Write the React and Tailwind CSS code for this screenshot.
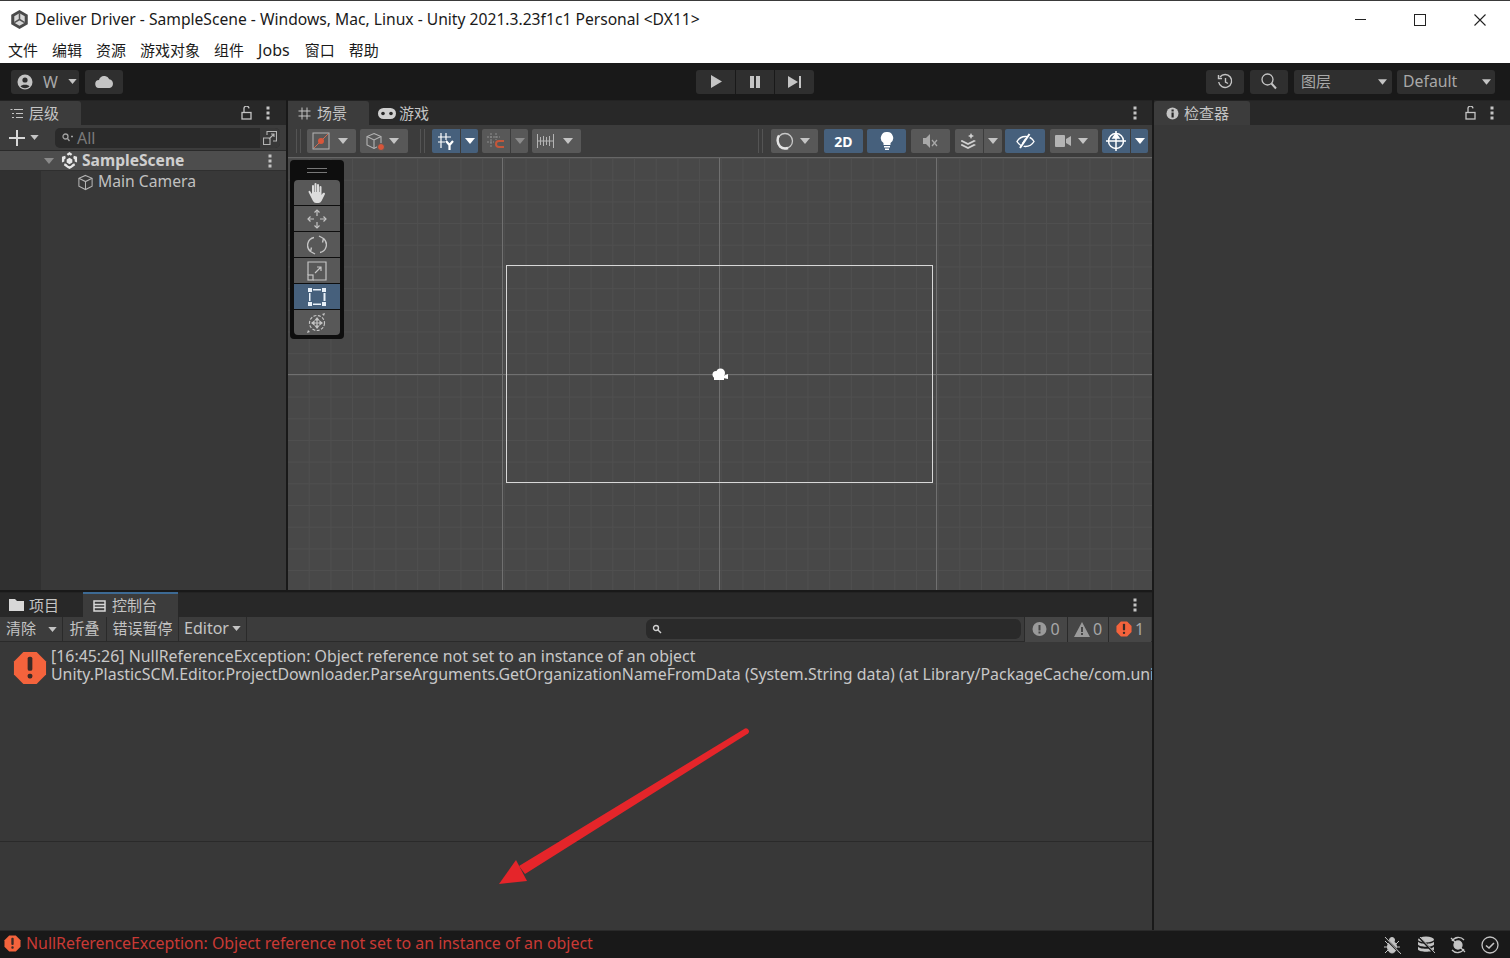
import React from "react";

const Caret = ({ className = "fill-[#c4c4c4]", w = 10, h = 6 }) => (
  <svg width={w} height={h} viewBox="0 0 10 6" className={className}>
    <path d="M0 0h10L5 6z" />
  </svg>
);

const Dots = ({ className = "" }) => (
  <svg width="4" height="14" viewBox="0 0 4 14" className={`fill-[#c4c4c4] ${className}`}>
    <rect x="0.5" y="0.5" width="3" height="3" />
    <rect x="0.5" y="5.5" width="3" height="3" />
    <rect x="0.5" y="10.5" width="3" height="3" />
  </svg>
);

const LockIcon = () => (
  <svg width="12" height="14" viewBox="0 0 12 14" fill="none" stroke="#c4c4c4" strokeWidth="1.3">
    <rect x="1" y="6.5" width="9" height="6.5" />
    <path d="M3 6.5V3a2.5 2.5 0 0 1 5-.6" />
  </svg>
);

const CubeIcon = ({ size = 18, stroke = "#b4b4b4" }) => (
  <svg width={size} height={size} viewBox="0 0 18 18" fill="none" stroke={stroke} strokeWidth="1.1">
    <path d="M9 1.5l7 3v8.5l-7 3.5-7-3.5V4.500z" />
    <path d="M2 4.500l7 3.500 7-3.500M9 8v8.500" />
  </svg>
);

const ErrorOct = ({ size = 20 }) => (
  <svg width={size} height={size} viewBox="0 0 36 36">
    <path d="M11 1h14l10 10v14L25 35H11L1 25V11z" fill="#f4633c" />
    <rect x="15.500" y="6" width="5" height="15" rx="2" fill="#3a2a26" />
    <rect x="15.500" y="24" width="5" height="5" rx="2" fill="#3a2a26" />
  </svg>
);

const UnityMark = ({ size = 17, fill = "#e6e6e6" }) => (
  <svg width={size} height={size} viewBox="0 0 18 18" fill={fill}>
    <path d="M9 0l3 2-1.500 2L9 3 7.500 4 6 2zM1 5l3.500-1 .5 2.500L3.500 8v2L1 11zM17 5l-3.500-1-.5 2.500L14.500 8v2l2.500 1zM9 6l3 2v3l-3 2-3-2V8zM4 12l2 1 1.500 1.500L9 15l1.500-.5L12 13l2-1 1 2-4 3-2 1-2-1-4-3z" />
  </svg>
);

function TitleBar() {
  return (
    <div className="h-[38px] shrink-0 bg-white border-t border-[#3a3a3a] flex items-center pl-[10px] text-[15.65px] text-[#1a1a1a]">
      <svg width="19" height="19" viewBox="0 0 20 20">
        <path d="M10 0l8.700 5v10L10 20l-8.700-5V5z" fill="#4a4a4a" />
        <path d="M10 3.500l5.500 3.200v6.600L10 16.500l-5.500-3.200V6.700z" fill="#d8d8d8" />
        <path d="M10 10V3.500M10 10l5.500 3.300M10 10l-5.500 3.300" stroke="#555" strokeWidth="1.600" />
      </svg>
      <span className="ml-[6px] whitespace-nowrap">Deliver Driver - SampleScene - Windows, Mac, Linux - Unity 2021.3.23f1c1 Personal &lt;DX11&gt;</span>
      <div className="ml-auto flex items-center text-[#111]">
        <div className="w-[60px] flex justify-center">
          <div className="w-[11px] h-px bg-[#222]" />
        </div>
        <div className="w-[60px] flex justify-center">
          <div className="w-[12px] h-[12px] border border-[#222]" />
        </div>
        <div className="w-[60px] flex justify-center">
          <svg width="12" height="12" viewBox="0 0 12 12" stroke="#222" strokeWidth="1.100">
            <path d="M.5.5l11 11M11.500.5l-11 11" />
          </svg>
        </div>
      </div>
    </div>
  );
}

function MenuBar() {
  const items = ["文件", "编辑", "资源", "游戏对象", "组件", "Jobs", "窗口", "帮助"];
  return (
    <div className="h-[25px] shrink-0 bg-white flex items-start pl-[8px] gap-[14px] text-[15px] text-[#1a1a1a] pt-[1px]">
      {items.map((m) => (
        <span key={m} className={m === "Jobs" ? "leading-[22px] text-[16px] mr-[1px]" : "leading-[22px]"}>{m}</span>
      ))}
    </div>
  );
}

const TopBtn = ({ className = "", children }) => (
  <div className={`h-[24px] bg-[#2f2f2f] rounded-[3px] flex items-center ${className}`}>{children}</div>
);

function MainToolbar() {
  return (
    <div className="h-[37px] shrink-0 bg-[#191919] flex items-center text-[16px] text-[#a0a0a0]">
      <TopBtn className="ml-[11px] w-[68px] gap-[10px] pl-[6px]">
        <svg width="16" height="16" viewBox="0 0 16 16">
          <circle cx="8" cy="8" r="7.500" fill="#c4c4c4" />
          <circle cx="8" cy="6" r="2.600" fill="#2f2f2f" />
          <path d="M3.500 12.500c1-2.500 8-2.500 9 0a7 7 0 0 1-9 0z" fill="#2f2f2f" />
        </svg>
        <span className="text-[#a8a8a8] leading-none">W</span>
        <Caret w={9} h={5} />
      </TopBtn>
      <TopBtn className="ml-[6px] w-[38px] justify-center">
        <svg width="19" height="12" viewBox="0 0 19 12" fill="#c4c4c4">
          <path d="M4.500 12a4 4 0 0 1-.5-8 5.500 5.500 0 0 1 10.300-.8A4.500 4.500 0 0 1 14.500 12z" />
        </svg>
      </TopBtn>
      <div className="ml-[573px] flex gap-px">
        <TopBtn className="w-[39px] rounded-r-none justify-center">
          <svg width="12" height="13" viewBox="0 0 12 13" fill="#c4c4c4"><path d="M1 0l11 6.500L1 13z" /></svg>
        </TopBtn>
        <TopBtn className="w-[38px] rounded-none justify-center">
          <svg width="10" height="12" viewBox="0 0 10 12" fill="#c4c4c4"><rect width="4" height="12" /><rect x="6" width="4" height="12" /></svg>
        </TopBtn>
        <TopBtn className="w-[39px] rounded-l-none justify-center">
          <svg width="13" height="12" viewBox="0 0 13 12" fill="#c4c4c4"><path d="M0 0l10 6-10 6z" /><rect x="11" width="2" height="12" /></svg>
        </TopBtn>
      </div>
      <TopBtn className="ml-[392px] w-[38px] justify-center">
        <svg width="17" height="17" viewBox="0 0 17 17" fill="none" stroke="#c4c4c4" strokeWidth="1.400">
          <path d="M3 4a6.500 6.500 0 1 1-1.300 5" />
          <path d="M1.500 2v3.500H5M8.500 5v4l2.500 1.500" />
        </svg>
      </TopBtn>
      <TopBtn className="ml-[6px] w-[38px] justify-center">
        <svg width="16" height="17" viewBox="0 0 16 17" fill="none" stroke="#c4c4c4" strokeWidth="1.300">
          <circle cx="6.500" cy="6.500" r="5.500" />
          <path d="M10.500 10.500l4.500 5" strokeWidth="2" />
        </svg>
      </TopBtn>
      <TopBtn className="ml-[6px] w-[98px] justify-between pl-[7px] pr-[5px]">
        <span className="text-[#a8a8a8] text-[15px]">图层</span>
        <Caret w={9} h={6} />
      </TopBtn>
      <TopBtn className="ml-[5px] w-[98px] justify-between pl-[6px] pr-[4px]">
        <span className="text-[#a8a8a8] text-[15.8px]">Default</span>
        <Caret w={9} h={6} />
      </TopBtn>
    </div>
  );
}

const TabStrip = ({ children, right, mr = "mr-[16px]" }) => (
  <div className="h-[25px] shrink-0 bg-[#282828] flex items-end text-[15px] text-[#c4c4c4] border-t border-[#232323]">
    {children}
    <div className={`ml-auto ${mr} self-center flex items-center gap-[13px]`}>{right}</div>
  </div>
);

function Hierarchy() {
  return (
    <div className="w-[286px] shrink-0 flex flex-col bg-[#383838]">
      <TabStrip right={<><LockIcon /><Dots /></>}>
        <div className="w-[81px] h-[24px] bg-[#3c3c3c] rounded-tr-[3px] flex items-center pl-[10px] gap-[6px]">
          <svg width="13" height="11" viewBox="0 0 13 11" stroke="#c4c4c4" strokeWidth="1.100" fill="none">
            <path d="M4 1.500h9M6 5.500h7M6 9.500h7M.5 1.500h2M2 5.500h2M2 9.500h2" />
          </svg>
          <span>层级</span>
        </div>
      </TabStrip>
      <div className="h-[26px] shrink-0 bg-[#3c3c3c] flex items-center pl-[9px] border-b border-[#2a2a2a]">
        <svg width="16" height="16" viewBox="0 0 16 16" fill="#d8d8d8">
          <rect y="7" width="16" height="2" /><rect x="7" width="2" height="16" />
        </svg>
        <Caret className="ml-[5px] fill-[#c4c4c4]" w={9} h={5} />
        <div className="ml-[16px] flex-1 mr-[6px] h-[20px] bg-[#2a2a2a] rounded-[5px] flex items-center pl-[7px] text-[#7a7a7a] text-[16px]">
          <svg width="11" height="9" viewBox="0 0 11 9" fill="none" stroke="#a0a0a0" strokeWidth="1.300">
            <circle cx="3.500" cy="3.500" r="2.500" /><path d="M5.500 5.500l2 2.500M9 3.500h2" />
          </svg>
          <span className="ml-[4px] leading-none">All</span>
          <div className="ml-auto w-[20px] h-[20px] bg-[#383838] rounded-r-[5px] flex items-center justify-center">
            <svg width="14" height="14" viewBox="0 0 14 14" fill="none" stroke="#b4b4b4" strokeWidth="1.100">
              <path d="M4 4V.5h9.500V10H10M.5 7h6.500v6.500H.5zM6 8l5-5M8 3h3v3" />
            </svg>
          </div>
        </div>
      </div>
      <div className="flex-1 flex">
        <div className="flex-1 flex flex-col bg-[linear-gradient(90deg,#303030_41px,#383838_41px)]">
          <div className="h-[20px] bg-[#4d4d4d] border-b border-[#2f2f2f] flex items-center pl-[44px] pr-[14px] text-[15.6px] font-bold text-[#cfcfcf]">
            <Caret className="fill-[#8a8a8a]" w={10} h={8} />
            <span className="ml-[7px]"><UnityMark /></span>
            <span className="ml-[4px] leading-none">SampleScene</span>
            <Dots className="ml-auto" />
          </div>
          <div className="h-[22px] flex items-center pl-[77px] text-[15.7px] text-[#c0c0c0]">
            <CubeIcon size={17} />
            <span className="ml-[4px] leading-none">Main Camera</span>
          </div>
        </div>
      </div>
    </div>
  );
}

const SceneBtn = ({ className = "", blue = false, children }) => (
  <div className={`h-[24px] rounded-[2px] flex items-center ${blue ? "bg-[#46607c]" : "bg-[#585858]"} ${className}`}>{children}</div>
);

const Grip = ({ className = "" }) => (
  <div className={`h-[24px] w-[5px] border-x border-[#545454] ${className}`} />
);

const Tool = ({ active = false, children }) => (
  <div className={`w-[46px] h-[25px] flex items-center justify-center ${active ? "bg-[#46607c]" : "bg-[#585858]"}`}>{children}</div>
);

function SceneToolbar() {
  return (
    <div className="h-[33px] shrink-0 bg-[#3c3c3c] flex items-center pl-[8px] border-b border-[#666]">
      <Grip />
      <SceneBtn className="ml-[6px] w-[49px] pl-[5px] gap-[8px]">
        <svg width="18" height="18" viewBox="0 0 18 18" fill="none">
          <rect x="1" y="1" width="16" height="16" stroke="#b4b4b4" />
          <path d="M2 16L16 2" stroke="#d06a50" />
          <circle cx="9" cy="9" r="3" fill="#d8563a" />
        </svg>
        <Caret />
      </SceneBtn>
      <SceneBtn className="ml-[4px] w-[48px] pl-[5px] gap-[6px]">
        <span className="relative">
          <CubeIcon size={18} />
          <span className="absolute right-[-2px] bottom-[-1px] w-[8px] h-[8px] rounded-full bg-[#d8563a] border border-[#585858]" />
        </span>
        <Caret />
      </SceneBtn>
      <Grip className="ml-[12px]" />
      <div className="ml-[7px] flex gap-px">
        <SceneBtn blue className="w-[28px] rounded-r-none justify-center">
          <svg width="18" height="18" viewBox="0 0 18 18" fill="none" stroke="#fff" strokeWidth="1.200">
            <path d="M1 5h13M1 10h7M4 1v15M9 1v7" />
            <path d="M9 9l3.500 4 3.500-4M12.500 13v5" strokeWidth="2.200" />
          </svg>
        </SceneBtn>
        <SceneBtn blue className="w-[17px] rounded-l-none justify-center"><Caret className="fill-white" /></SceneBtn>
      </div>
      <div className="ml-[4px] flex gap-px">
        <SceneBtn className="w-[28px] rounded-r-none bg-[#4a4a4a] justify-center">
          <svg width="20" height="18" viewBox="0 0 20 18" fill="none" stroke="#8c8c8c">
            <path d="M1 5h13M1 10h7M5 1v15M10 1v7" strokeDasharray="2 1" />
            <path d="M18 9h-5a3 3 0 0 0 0 6h5" stroke="#c4573a" strokeWidth="2" />
          </svg>
        </SceneBtn>
        <SceneBtn className="w-[17px] rounded-l-none bg-[#4a4a4a] justify-center"><Caret className="fill-[#8c8c8c]" /></SceneBtn>
      </div>
      <SceneBtn className="ml-[4px] w-[49px] pl-[5px] gap-[9px]">
        <svg width="17" height="16" viewBox="0 0 17 16" fill="none" stroke="#b4b4b4">
          <path d="M.5 1v14M16.500 1v14M3.500 4v8M6.500 3v10M9.500 4v8M12.500 3v10M.5 8h16" />
        </svg>
        <Caret />
      </SceneBtn>
      <Grip className="ml-[177px]" />
      <SceneBtn className="ml-[8px] w-[47px] pl-[5px] gap-[6px]">
        <svg width="18" height="18" viewBox="0 0 18 18" fill="none">
          <circle cx="9" cy="9" r="7.500" stroke="#c8c8c8" strokeWidth="1.300" />
          <path d="M3 3.500C1 6 1 11 4 14.500c2 1.800 5 2.500 8 1.500" stroke="#e4e4e4" strokeWidth="2.400" />
        </svg>
        <Caret />
      </SceneBtn>
      <SceneBtn blue className="ml-[6px] w-[39px] justify-center text-[14px] font-bold text-white">2D</SceneBtn>
      <SceneBtn blue className="ml-[4px] w-[39px] justify-center">
        <svg width="14" height="18" viewBox="0 0 14 18" fill="#fff">
          <path d="M7 0a6 6 0 0 1 3.500 11v2h-7v-2A6 6 0 0 1 7 0z" /><rect x="4" y="14" width="6" height="1.500" /><rect x="5" y="16.500" width="4" height="1.500" />
        </svg>
      </SceneBtn>
      <SceneBtn className="ml-[5px] w-[39px] justify-center">
        <svg width="15" height="14" viewBox="0 0 15 14" fill="#a8a8a8">
          <path d="M0 4h3l4-4v14l-4-4H0z" />
          <path d="M9 6l5 6M14 6l-5 6" stroke="#a8a8a8" strokeWidth="1.300" />
        </svg>
      </SceneBtn>
      <div className="ml-[5px] flex gap-px">
        <SceneBtn className="w-[28px] rounded-r-none justify-center">
          <svg width="16" height="16" viewBox="0 0 16 16" fill="#d0d0d0">
            <path d="M1 7l6 3 6-3 2 1-8 4-8-4zM1 11l6 3 6-3 2 1-8 4-8-4z" />
            <path d="M10 0l1 2 2 1-2 1-1 2-1-2-2-1 2-1z" />
          </svg>
        </SceneBtn>
        <SceneBtn className="w-[18px] rounded-l-none justify-center"><Caret /></SceneBtn>
      </div>
      <SceneBtn blue className="ml-[3px] w-[40px] justify-center">
        <svg width="19" height="16" viewBox="0 0 19 16" fill="none" stroke="#fff" strokeWidth="1.400">
          <path d="M1 8.500s3-5 8.500-5S18 8.500 18 8.500s-3 5-8.500 5c-5.500 0-8.500-5-8.500-5z" />
          <path d="M14.500 1L5 15" strokeWidth="2.400" stroke="#46607c" />
          <path d="M13.500 1L4 15" strokeWidth="2" />
          <path d="M6 10l3-4.500h2L7 11z" fill="#fff" stroke="none" />
        </svg>
      </SceneBtn>
      <SceneBtn className="ml-[5px] w-[48px] pl-[5px] gap-[7px]">
        <svg width="16" height="12" viewBox="0 0 16 12" fill="#b4b4b4">
          <rect width="10" height="12" rx="1" /><path d="M11 4l5-3v10l-5-3z" />
        </svg>
        <Caret />
      </SceneBtn>
      <div className="ml-[4px] flex gap-px">
        <SceneBtn blue className="w-[28px] rounded-r-none justify-center">
          <svg width="20" height="20" viewBox="0 0 20 20" fill="none" stroke="#fff" strokeWidth="1.500">
            <circle cx="10" cy="10" r="7.500" /><path d="M10 0v20M0 10h20" />
            <path d="M10 2.500L7 7h6z" fill="#fff" />
          </svg>
        </SceneBtn>
        <SceneBtn blue className="w-[17px] rounded-l-none justify-center"><Caret className="fill-white" /></SceneBtn>
      </div>
    </div>
  );
}

function Toolbox() {
  return (
    <div className="absolute left-[2px] top-[2px] w-[54px] bg-[#0e0e0e] rounded-[4px] px-[4px] pb-[4px] flex flex-col">
      <div className="h-[20px] flex flex-col items-center justify-center gap-[3px]">
        <div className="w-[20px] h-px bg-[#777]" />
        <div className="w-[20px] h-px bg-[#777]" />
      </div>
      <div className="flex flex-col gap-px rounded-[4px] overflow-hidden">
        <Tool>
          <svg width="20" height="22" viewBox="0 0 20 22" fill="#dcdcdc">
            <path d="M3 9l2 3V4a1 1 0 0 1 2 0v6h.5V2a1 1 0 0 1 2 0v8h.5V3a1 1 0 0 1 2 0v7h.5V5a1 1 0 0 1 2 0v8l1.500-2a1.200 1.200 0 0 1 2 1l-3.500 7a4 4 0 0 1-3 2H9a4 4 0 0 1-3-2L1.500 10a1 1 0 0 1 1.500-1z" />
          </svg>
        </Tool>
        <Tool>
          <svg width="20" height="20" viewBox="0 0 20 20" fill="none" stroke="#c4c4c4" strokeWidth="1.200">
            <path d="M10 1v6M10 13v6M1 10h6M13 10h6" />
            <path d="M7.500 3.500L10 1l2.500 2.500M7.500 16.500L10 19l2.500-2.500M3.500 7.500L1 10l2.500 2.500M16.500 7.500L19 10l-2.500 2.500" />
          </svg>
        </Tool>
        <Tool>
          <svg width="20" height="20" viewBox="0 0 20 20" fill="none" stroke="#c4c4c4" strokeWidth="1.400">
            <path d="M7 2.500a8 8 0 0 0-3.500 14" />
            <path d="M13 17.500a8 8 0 0 0 3.500-14" />
            <path d="M8 19l-4.500-2.500 1-4M12 1l4.500 2.500-1 4" />
          </svg>
        </Tool>
        <Tool>
          <svg width="20" height="20" viewBox="0 0 20 20" fill="none" stroke="#c4c4c4" strokeWidth="1.200">
            <path d="M1 14V1h18v18H6" /><rect x="1" y="14" width="5" height="5" />
            <path d="M8 12l6-6M10 6h4v4" />
          </svg>
        </Tool>
        <Tool active>
          <svg width="20" height="20" viewBox="0 0 20 20" fill="#e8f0f8">
            <rect x="1" y="1" width="4" height="4" /><rect x="15" y="1" width="4" height="4" /><rect x="1" y="15" width="4" height="4" /><rect x="15" y="15" width="4" height="4" />
            <rect x="6" y="2" width="8" height="1.500" /><rect x="6" y="16.500" width="8" height="1.500" /><rect x="2" y="6" width="1.500" height="8" /><rect x="16.500" y="6" width="2" height="8" />
          </svg>
        </Tool>
        <Tool>
          <svg width="20" height="20" viewBox="0 0 20 20" fill="none" stroke="#c4c4c4" strokeWidth="1.200">
            <circle cx="10" cy="10" r="7.500" strokeDasharray="3 1.500" />
            <path d="M10 6v8M6 10h8M10 5l-1.500 2h3zM10 15l-1.500-2h3zM5 10l2-1.500v3zM15 10l-2-1.500v3z" />
            <path d="M18 0l-3 1 2 2zM0 20l3-1-2-2z" fill="#c4c4c4" stroke="none" />
          </svg>
        </Tool>
      </div>
    </div>
  );
}

function Scene() {
  return (
    <div className="flex-1 flex flex-col min-w-0">
      <TabStrip mr="mr-[15px]" right={<Dots />}>
        <div className="w-[81px] h-[24px] bg-[#3c3c3c] rounded-tr-[3px] flex items-center pl-[10px] gap-[6px]">
          <svg width="13" height="13" viewBox="0 0 13 13" stroke="#c4c4c4" fill="none"><path d="M4 .5v12M9 .5v12M.5 4h12M.5 9h12" /></svg>
          <span>场景</span>
        </div>
        <div className="h-[24px] flex items-center pl-[9px] gap-[3px]">
          <svg width="18" height="11" viewBox="0 0 18 11" fill="#d0d0d0">
            <rect width="18" height="11" rx="5.500" /><circle cx="5" cy="5.500" r="1.800" fill="#282828" /><circle cx="13" cy="5.500" r="1.800" fill="#282828" />
          </svg>
          <span>游戏</span>
        </div>
      </TabStrip>
      <SceneToolbar />
      <div className="relative flex-1 overflow-hidden bg-[#484848] bg-[linear-gradient(#4f4f4f_1px,transparent_1px),linear-gradient(90deg,#4f4f4f_1px,transparent_1px)] bg-size-[21.7px_21.7px] bg-position-[-1px_0px]">
        <div className="absolute left-[214px] top-0 bottom-0 w-px bg-[#707070]" />
        <div className="absolute left-[431px] top-0 bottom-0 w-px bg-[#707070]" />
        <div className="absolute left-[648px] top-0 bottom-0 w-px bg-[#707070]" />
        <div className="absolute left-0 right-0 top-[216px] h-px bg-[#707070]" />
        <div className="absolute left-[218px] top-[107px] w-[427px] h-[218px] border border-[#d8d8d8]" />
        <svg className="absolute left-[423px] top-[210px]" width="18" height="13" viewBox="0 0 18 13" fill="#fff">
          <circle cx="5" cy="6.500" r="3.500" /><circle cx="9.500" cy="5" r="4.500" />
          <rect x="3" y="6" width="10" height="6" /><path d="M12 8l5-2v5l-5-1z" />
        </svg>
        <Toolbox />
      </div>
    </div>
  );
}

const ConsoleBtn = ({ className = "", children }) => (
  <div className={`h-[25px] flex items-center justify-center border-r border-[#2a2a2a] ${className}`}>{children}</div>
);

function Console() {
  return (
    <div className="h-[338px] shrink-0 flex flex-col bg-[#383838] relative">
      <TabStrip mr="mr-[15px]" right={<Dots />}>
        <div className="h-[24px] w-[83px] flex items-center pl-[9px] gap-[5px]">
          <svg width="15" height="12" viewBox="0 0 15 12" fill="#d8d8d8"><path d="M0 0h6l2 2h7v10H0z" /></svg>
          <span>项目</span>
        </div>
        <div className="h-[25px] w-[95px] bg-[#3c3c3c] border-t-2 border-[#3d6a94] flex items-center pl-[10px] gap-[6px]">
          <svg width="13" height="12" viewBox="0 0 13 12" fill="none" stroke="#d8d8d8" strokeWidth="1.500">
            <rect x="1" y="1" width="11" height="10" /><path d="M1 4.500h11M1 7.500h11" />
          </svg>
          <span>控制台</span>
        </div>
      </TabStrip>
      <div className="h-[25px] shrink-0 bg-[#3c3c3c] flex items-center border-b border-[#2a2a2a] text-[15px] leading-[22px] text-[#c4c4c4]">
        <ConsoleBtn className="w-[42px] border-r-0 pb-[2px]">清除</ConsoleBtn>
        <ConsoleBtn className="w-[21px]"><Caret w={9} h={5} /></ConsoleBtn>
        <ConsoleBtn className="w-[44px] pb-[2px]">折叠</ConsoleBtn>
        <ConsoleBtn className="w-[72px] pb-[2px]">错误暂停</ConsoleBtn>
        <ConsoleBtn className="w-[68px] gap-[3px] text-[16px] pb-[2px]">Editor <Caret w={9} h={5} /></ConsoleBtn>
        <div className="ml-[399px] w-[375px] h-[20px] bg-[#2a2a2a] rounded-[6px] flex items-center pl-[6px]">
          <svg width="10" height="10" viewBox="0 0 10 10" fill="none" stroke="#d0d0d0" strokeWidth="1.400"><circle cx="4" cy="4" r="2.500" /><path d="M6 6l3 3" /></svg>
        </div>
        <div className="ml-[3px] flex h-[25px] text-[#a8a8a8] text-[16px]">
          <div className="w-[44px] flex items-center justify-center gap-[3px] border-x border-[#2a2a2a] bg-[#464646]">
            <svg width="15" height="15" viewBox="0 0 15 15"><circle cx="7.500" cy="7" r="7" fill="#9a9a9a" /><rect x="6.500" y="3" width="2" height="5.500" fill="#464646" /><rect x="6.500" y="9.500" width="2" height="2" fill="#464646" /></svg>
            <span>0</span>
          </div>
          <div className="w-[41px] flex items-center justify-center gap-[3px] border-r border-[#2a2a2a] bg-[#464646]">
            <svg width="16" height="15" viewBox="0 0 16 15"><path d="M8 0l8 15H0z" fill="#9a9a9a" /><rect x="7" y="5" width="2" height="5" fill="#464646" /><rect x="7" y="11" width="2" height="2" fill="#464646" /></svg>
            <span>0</span>
          </div>
          <div className="w-[42px] flex items-center justify-center gap-[3px] bg-[#464646]">
            <ErrorOct size={16} />
            <span>1</span>
          </div>
        </div>
      </div>
      <div className="h-[200px] shrink-0 border-b border-[#2a2a2a] flex pl-[13px] pt-[5px] overflow-hidden">
        <div className="pt-[4px] shrink-0"><ErrorOct size={34} /></div>
        <div className="ml-[4px] text-[15.9px] leading-[18px] text-[#c8c8c8] whitespace-nowrap">
          <div>[16:45:26] NullReferenceException: Object reference not set to an instance of an object</div>
          <div>Unity.PlasticSCM.Editor.ProjectDownloader.ParseArguments.GetOrganizationNameFromData (System.String data) (at Library/PackageCache/com.unity</div>
        </div>
      </div>
      <div className="flex-1" />
      <svg className="absolute left-[495px] top-[130px]" width="260" height="170" viewBox="0 0 260 170">
        <path d="M250 6.500a3 3 0 0 1 3 5L30 152l-6-8z" fill="#e5252a" />
        <path d="M4 162l17-24 11 21z" fill="#e5252a" />
      </svg>
    </div>
  );
}

function StatusBar() {
  return (
    <div className="h-[28px] shrink-0 bg-[#191919] flex items-center text-[15.9px] text-[#c93a35] border-t border-[#2a2a2a]">
      <span className="ml-[4px] mb-[2px]"><ErrorOct size={17} /></span>
      <span className="ml-[5px] mb-[1px] whitespace-nowrap">NullReferenceException: Object reference not set to an instance of an object</span>
      <div className="ml-auto flex items-center mr-[11px]">
        <svg width="18" height="18" viewBox="0 0 18 18" fill="#c4c4c4" stroke="#c4c4c4">
          <ellipse cx="9" cy="11" rx="4.500" ry="6" /><circle cx="9" cy="4" r="2.500" />
          <path d="M2 5l3 3M16 5l-3 3M1 11h3M17 11h-3M2 17l3-3M16 17l-3-3" fill="none" />
          <path d="M1 1l16 16" stroke="#191919" strokeWidth="2" /><path d="M2 1l16 17" />
        </svg>
        <svg className="ml-[16px]" width="18" height="18" viewBox="0 0 18 18" fill="#c4c4c4">
          <ellipse cx="9" cy="3.500" rx="8" ry="3" /><path d="M1 5.500c1 3 15 3 16 0v3c-1 3-15 3-16 0zM1 10.500c1 3 15 3 16 0v3c-1 3-15 3-16 0z" />
          <path d="M2 1l15 16" stroke="#191919" strokeWidth="2" /><path d="M3 1l15 16" stroke="#c4c4c4" />
        </svg>
        <svg className="ml-[14px]" width="18" height="18" viewBox="0 0 18 18" fill="none" stroke="#c4c4c4" strokeWidth="1.300">
          <path d="M3 5a7.500 7.500 0 0 1 12-1M15 13a7.500 7.500 0 0 1-12 1" />
          <circle cx="9" cy="9" r="4" fill="#c4c4c4" />
          <path d="M2 2l14 14" />
        </svg>
        <svg className="ml-[14px]" width="18" height="18" viewBox="0 0 18 18" fill="none" stroke="#c4c4c4" strokeWidth="1.300">
          <circle cx="9" cy="9" r="8" /><path d="M5 9.500l3 2.500 5-5" strokeWidth="1.600" />
        </svg>
      </div>
    </div>
  );
}

export default function App() {
  return (
    <div className="w-[1510px] h-[958px] flex flex-col overflow-hidden bg-[#191919] font-['Noto_Sans','Noto_Sans_CJK_SC',sans-serif]">
      <TitleBar />
      <MenuBar />
      <MainToolbar />
      <div className="flex-1 flex gap-[2px] min-h-0">
        <div className="w-[1152px] flex flex-col gap-[2px] shrink-0">
          <div className="h-[490px] flex gap-[2px] shrink-0">
            <Hierarchy />
            <Scene />
          </div>
          <Console />
        </div>
        <div className="flex-1 flex flex-col bg-[#383838]">
          <TabStrip right={<><LockIcon /><Dots /></>}>
            <div className="w-[96px] h-[24px] bg-[#3c3c3c] rounded-t-[3px] flex items-center pl-[12px] gap-[5px]">
              <svg width="13" height="13" viewBox="0 0 13 13"><circle cx="6.500" cy="6.500" r="6" fill="#c4c4c4" /><rect x="5.500" y="5.500" width="2.200" height="5" fill="#282828" /><rect x="5.500" y="2.500" width="2.200" height="2" fill="#282828" /></svg>
              <span>检查器</span>
            </div>
          </TabStrip>
        </div>
      </div>
      <StatusBar />
    </div>
  );
}
